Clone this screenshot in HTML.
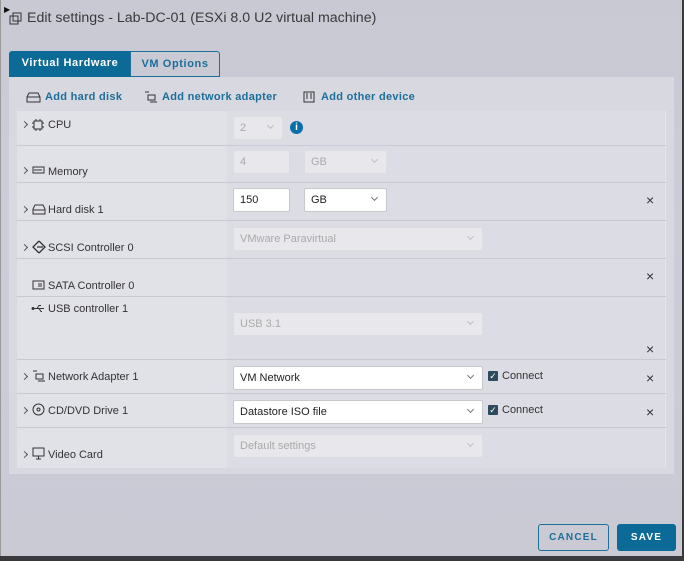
<!DOCTYPE html>
<html><head><style>
*{box-sizing:border-box;margin:0;padding:0}
body{width:684px;height:561px;background:#3a3a3e;font-family:"Liberation Sans",sans-serif;position:relative;overflow:hidden}
.a{position:absolute}
#dlg{left:0;top:0;width:682px;height:556px;background:linear-gradient(#c9c9d4,#cdcdd8 40%,#cacad5);}
.tab{font-size:11px;font-weight:bold;letter-spacing:.6px;text-align:center;line-height:25px}
.lbl{font-size:11px;color:#333;}
.lnk{font-size:11px;font-weight:bold;color:#1d6e99;letter-spacing:.3px}
.in{background:#fff;border:1px solid #c8c8cc;border-radius:2px;font-size:11px;color:#222;padding-left:6px;line-height:22px}
.dis{background:#e8e8ec;border:1px solid #dcdce0;color:#aaa}
.chev{position:absolute;right:9px;top:6px;width:5px;height:5px;border-right:1px solid #777;border-bottom:1px solid #777;transform:rotate(45deg)}
.dis .chev{border-color:#c0c0c4}
.row{position:absolute;left:17px;width:649px;border-bottom:1px solid #c9c9d1}
.x{position:absolute;left:646px;font-size:14px;color:#333;line-height:14px}
.ar{position:absolute;left:22px;width:5px;height:5px;border-right:1px solid #555;border-top:1px solid #555;transform:rotate(45deg)}
.cb{position:absolute;left:488px;width:10px;height:10px;background:#2e4a5e;border-radius:1px;color:#fff;font-size:9px;line-height:10px;text-align:center}
</style></head><body>
<div id="dlg" class="a">
<div class="a" style="left:0;top:0;width:1px;height:556px;background:#999"></div>
<div class="a" style="left:4px;top:5px;font-size:8px;color:#111">▶</div>
<svg class="a" style="left:9px;top:11px" width="14" height="14" viewBox="0 0 14 14"><rect x="1" y="5" width="8" height="8" fill="none" stroke="#333"/><rect x="4" y="2" width="8" height="8" fill="none" stroke="#333"/></svg>
<div class="a" style="left:27px;top:10px;font-size:14.2px;color:#3a3a3a">Edit settings - Lab-DC-01 (ESXi 8.0 U2 virtual machine)</div>
<div class="a tab" style="left:9px;top:51px;width:122px;height:26px;background:#0b6a96;color:#fff;border-radius:3px 0 0 0">Virtual Hardware</div>
<div class="a tab" style="left:130px;top:51px;width:90px;height:26px;border:1px solid #1d6e99;color:#1d6e99;border-radius:0 3px 0 0">VM Options</div>
<div class="a" style="left:9px;top:77px;width:665px;height:397px;background:#d8d8e0"></div>
<div class="a" style="left:17px;top:111px;width:649px;height:357px;background:#dcdce4;border-right:1px solid #e4e4ea"></div>
<div class="a" style="left:17px;top:111px;width:210px;height:357px;background:#e1e1e8"></div>
<svg class="a" style="left:26px;top:91px" width="15" height="12"><path d="M1 6 L3 2 H12 L14 6 V11 H1 Z M1 6 H14" fill="none" stroke="#333"/></svg>
<div class="a lnk" style="left:45px;top:91px">Add hard disk</div>
<svg class="a" style="left:144px;top:91px" width="14" height="12"><path d="M1 1 H5 M4 4 H11 V9 H4 Z M6 11 H13" fill="none" stroke="#333"/></svg>
<div class="a lnk" style="left:162px;top:91px">Add network adapter</div>
<svg class="a" style="left:303px;top:91px" width="12" height="12"><rect x="1" y="1" width="10" height="10" fill="none" stroke="#333"/><path d="M3 3H5M3 5H5M3 7H5M7 3H9M7 5H9M7 7H9" stroke="#333"/></svg>
<div class="a lnk" style="left:321px;top:91px">Add other device</div>

<div class="row" style="top:111px;height:35px"></div>
<div class="row" style="top:146px;height:37px"></div>
<div class="row" style="top:183px;height:38px"></div>
<div class="row" style="top:221px;height:38px"></div>
<div class="row" style="top:259px;height:38px"></div>
<div class="row" style="top:297px;height:63px"></div>
<div class="row" style="top:360px;height:34px"></div>
<div class="row" style="top:394px;height:34px"></div>
<div class="row" style="top:428px;height:40px;border:none"></div>

<div class="ar" style="top:122px"></div><svg class="a" style="left:32px;top:119px" width="12" height="12"><rect x="2" y="2" width="8" height="8" fill="none" stroke="#333"/><path d="M4 0V2M8 0V2M4 10V12M8 10V12M0 4H2M0 8H2M10 4H12M10 8H12" stroke="#333"/></svg><div class="a lbl" style="left:48px;top:119px">CPU</div>
<div class="ar" style="top:168px"></div><svg class="a" style="left:32px;top:166px" width="13" height="9"><rect x="1" y="1" width="11" height="6" fill="none" stroke="#333"/><path d="M3 3V5M5 3V5M7 3V5M9 3V5" stroke="#333"/></svg><div class="a lbl" style="left:48px;top:166px">Memory</div>
<div class="ar" style="top:207px"></div><svg class="a" style="left:32px;top:203px" width="14" height="12"><path d="M1 6 L3 2 H11 L13 6 V11 H1 Z M1 7 H13" fill="none" stroke="#333"/></svg><div class="a lbl" style="left:48px;top:204px">Hard disk 1</div>
<div class="ar" style="top:245px"></div><svg class="a" style="left:32px;top:240px" width="14" height="14"><path d="M7 1L1 7L7 13M7 1L13 7L7 13M5 7H11" fill="none" stroke="#333" stroke-width="1.3"/></svg><div class="a lbl" style="left:48px;top:242px">SCSI Controller 0</div>
<svg class="a" style="left:32px;top:280px" width="13" height="10"><rect x="1" y="1" width="11" height="8" fill="none" stroke="#333"/><path d="M6 4H10M6 6H10" stroke="#333"/></svg><div class="a lbl" style="left:48px;top:280px">SATA Controller 0</div>
<svg class="a" style="left:31px;top:304px" width="14" height="9"><circle cx="2" cy="4.5" r="1.5" fill="#333"/><path d="M3 4.5H13M6 4.5L8 1.5H10M8 4.5L10 7.5H11" fill="none" stroke="#333"/></svg><div class="a lbl" style="left:48px;top:303px">USB controller 1</div>
<div class="ar" style="top:374px"></div><svg class="a" style="left:32px;top:370px" width="14" height="12"><path d="M1 1 H5 M4 4 H11 V9 H4 Z M6 11 H13" fill="none" stroke="#333"/></svg><div class="a lbl" style="left:48px;top:371px">Network Adapter 1</div>
<div class="ar" style="top:408px"></div><svg class="a" style="left:32px;top:403px" width="13" height="13"><circle cx="6.5" cy="6.5" r="5.5" fill="none" stroke="#333"/><circle cx="6.5" cy="6.5" r="1.5" fill="none" stroke="#333"/></svg><div class="a lbl" style="left:48px;top:405px">CD/DVD Drive 1</div>
<div class="ar" style="top:452px"></div><svg class="a" style="left:32px;top:447px" width="13" height="13"><rect x="1" y="1" width="11" height="8" fill="none" stroke="#333"/><path d="M6.5 9V12M4 12H9" stroke="#333"/></svg><div class="a lbl" style="left:48px;top:449px">Video Card</div>

<div class="a in dis" style="left:233px;top:116px;width:50px;height:24px">2<span class="chev"></span></div>
<div class="a" style="left:290px;top:121px;width:13px;height:13px;border-radius:50%;background:#0a6ea8;color:#fff;font-size:10px;font-weight:bold;text-align:center;line-height:13px">i</div>
<div class="a in dis" style="left:233px;top:150px;width:57px;height:24px">4</div>
<div class="a in dis" style="left:304px;top:150px;width:83px;height:24px">GB<span class="chev"></span></div>
<div class="a in" style="left:233px;top:188px;width:57px;height:24px">150</div>
<div class="a in" style="left:304px;top:188px;width:83px;height:24px">GB<span class="chev"></span></div>
<div class="x" style="top:193px">×</div>
<div class="a in dis" style="left:233px;top:227px;width:250px;height:24px">VMware Paravirtual<span class="chev"></span></div>
<div class="x" style="top:269px">×</div>
<div class="a in dis" style="left:233px;top:312px;width:250px;height:24px">USB 3.1<span class="chev"></span></div>
<div class="x" style="top:342px">×</div>
<div class="a in" style="left:233px;top:366px;width:250px;height:24px">VM Network<span class="chev"></span></div>
<div class="cb" style="top:371px">✓</div><div class="a lbl" style="left:502px;top:370px">Connect</div>
<div class="x" style="top:371px">×</div>
<div class="a in" style="left:233px;top:400px;width:250px;height:24px">Datastore ISO file<span class="chev"></span></div>
<div class="cb" style="top:405px">✓</div><div class="a lbl" style="left:502px;top:404px">Connect</div>
<div class="x" style="top:405px">×</div>
<div class="a in dis" style="left:233px;top:434px;width:250px;height:24px">Default settings<span class="chev"></span></div>

<div class="a tab" style="left:538px;top:524px;width:71px;height:27px;border:1px solid #1d6e99;border-radius:3px;color:#1d6e99;line-height:25px;font-size:10px;letter-spacing:1.2px">CANCEL</div>
<div class="a tab" style="left:617px;top:524px;width:59px;height:27px;background:#0b6a96;border-radius:3px;color:#fff;line-height:27px;font-size:10px;letter-spacing:1.2px">SAVE</div>
</div>
</body></html>
